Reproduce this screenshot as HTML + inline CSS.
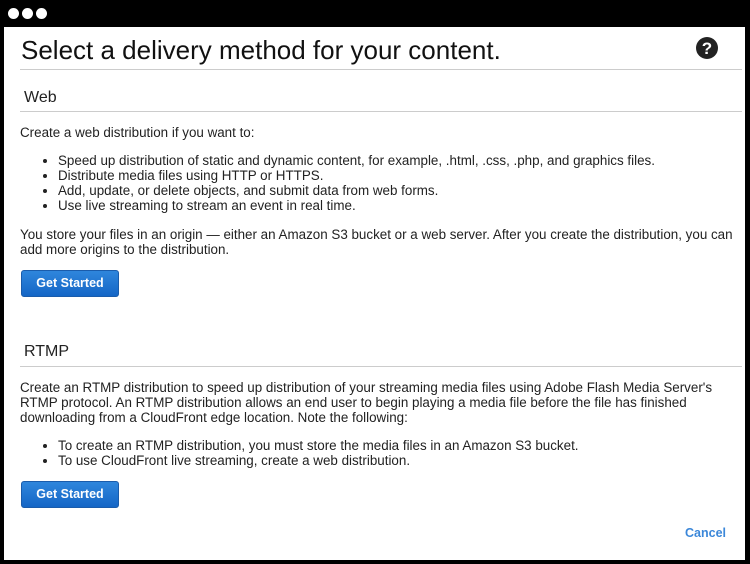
<!DOCTYPE html>
<html><head><style>
body{margin:0;width:750px;height:564px;background:#000;position:relative;overflow:hidden;font-family:"Liberation Sans",Arial,sans-serif;color:#222;}
.dot{position:absolute;top:8px;width:11px;height:11px;border-radius:50%;background:#fff}
#c{position:absolute;left:4px;top:27px;width:741px;height:533px;background:#fff}
.a{position:absolute;white-space:nowrap}
.t{font-size:13.4px;line-height:15px}
.hr{position:absolute;left:16px;width:722px;height:1px;background:#ccc}
.btn{position:absolute;left:17px;width:98px;height:27px;border-radius:3px;background:linear-gradient(#2f86dc,#1466c6);border:1px solid #1a5cab;box-sizing:border-box;color:#fff;font-weight:bold;font-size:12.5px;text-align:center;line-height:25px}
ul{margin:0;padding-left:38px}
li{margin:0}
</style></head><body>
<div class="dot" style="left:8px"></div><div class="dot" style="left:22px"></div><div class="dot" style="left:36px"></div>
<div id="c">
<div class="a" style="left:17px;top:8px;font-size:26px;color:#111">Select a delivery method for your content.</div>
<svg class="a" style="left:692px;top:10px" width="22" height="22" viewBox="0 0 22 22"><circle cx="11" cy="11" r="11" fill="#222"/><text x="11" y="17" font-family="Liberation Sans" font-weight="bold" font-size="17" fill="#fff" text-anchor="middle">?</text></svg>
<div class="hr" style="top:42px"></div>
<div class="a" style="left:20px;top:62px;font-size:16px">Web</div>
<div class="hr" style="top:84px"></div>
<div class="a t" style="left:16px;top:98px">Create a web distribution if you want to:</div>
<div class="a t" style="left:16px;top:126px"><ul>
<li>Speed up distribution of static and dynamic content, for example, .html, .css, .php, and graphics files.</li>
<li>Distribute media files using HTTP or HTTPS.</li>
<li>Add, update, or delete objects, and submit data from web forms.</li>
<li>Use live streaming to stream an event in real time.</li></ul></div>
<div class="a t" style="left:16px;top:200px">You store your files in an origin — either an Amazon S3 bucket or a web server. After you create the distribution, you can<br>add more origins to the distribution.</div>
<div class="btn" style="top:243px">Get Started</div>
<div class="a" style="left:20px;top:316px;font-size:16px">RTMP</div>
<div class="hr" style="top:339px"></div>
<div class="a t" style="left:16px;top:353px">Create an RTMP distribution to speed up distribution of your streaming media files using Adobe Flash Media Server's<br>RTMP protocol. An RTMP distribution allows an end user to begin playing a media file before the file has finished<br>downloading from a CloudFront edge location. Note the following:</div>
<div class="a t" style="left:16px;top:411px"><ul>
<li>To create an RTMP distribution, you must store the media files in an Amazon S3 bucket.</li>
<li>To use CloudFront live streaming, create a web distribution.</li></ul></div>
<div class="btn" style="top:454px">Get Started</div>
<div class="a" style="left:681px;top:499px;font-size:12.5px;font-weight:bold;color:#3b87d9">Cancel</div>
</div>
</body></html>
